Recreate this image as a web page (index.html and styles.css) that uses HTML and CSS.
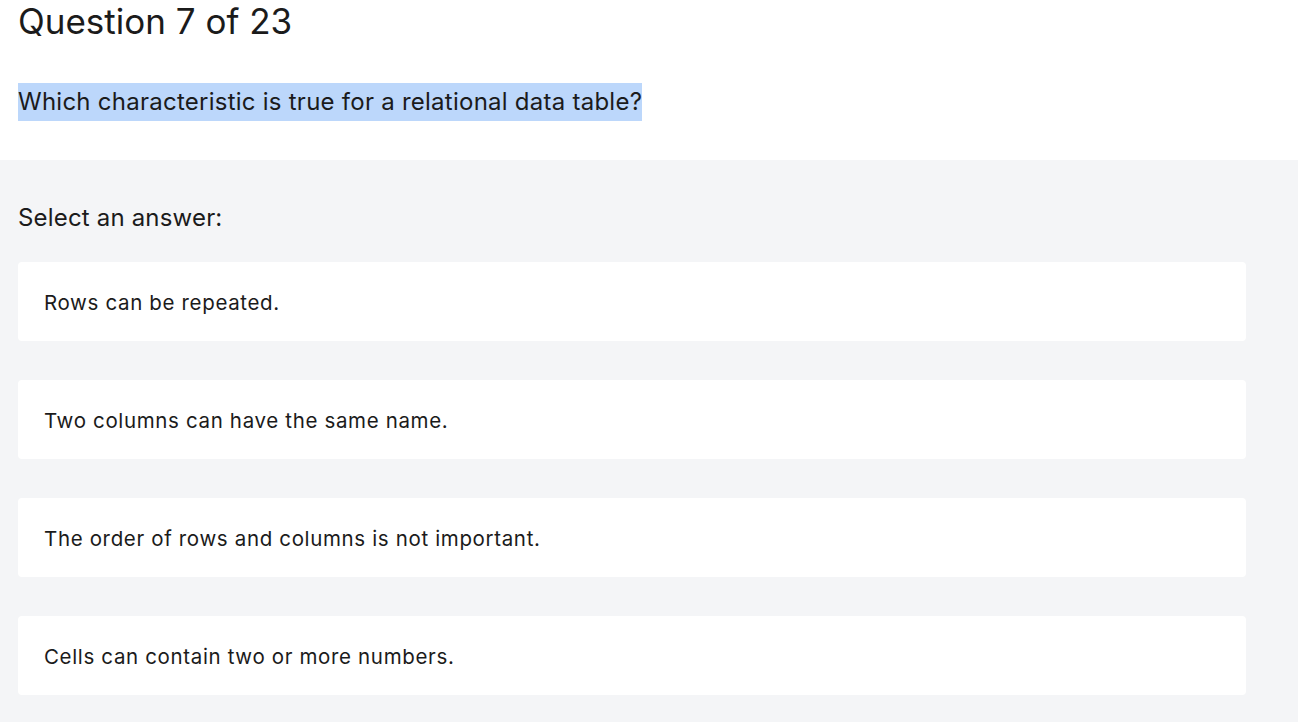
FILE: index.html
```html
<!DOCTYPE html>
<html>
<head>
  <title>Quiz</title>
  <link rel="stylesheet" href="styles.css">
</head>
<body>
  <!-- --- Question header --- -->
  <div class="question-header">
    <h1 class="question-count">Question 7 of 23</h1>
    <p class="question-text"><span class="selected-text">Which characteristic is true for a relational data table?</span></p>
  </div>

  <!-- --- Answers area --- -->
  <div class="answer-section">
    <p class="answer-prompt">Select an answer:</p>
    <div class="answer-list">
      <div class="answer-option">Rows can be repeated.</div>
      <div class="answer-option">Two columns can have the same name.</div>
      <div class="answer-option">The order of rows and columns is not important.</div>
      <div class="answer-option">Cells can contain two or more numbers.</div>
    </div>
  </div>
</body>
</html>
```

FILE: styles.css
```css
/* Basic page styling */
body {
  margin: 0;
  font-family: Inter, "Noto Sans", sans-serif;
  color: #1b1b1b;
  background-color: #f4f5f7;
}

/* Question header */
.question-header {
  background-color: #ffffff;
  padding: 0 18px 39px 18px;
}
.question-count {
  margin: 0;
  font-size: 35px;
  font-weight: 400;
  line-height: 43px;
}
.question-text {
  display: flex;
  margin: 40px 0 0 0;
  font-size: 24px;
  letter-spacing: 0.25px;
}
.selected-text {
  padding: 5px 0 5px 0;
  line-height: 28px;
  background-color: #bcd7fb;
}

/* Answers */
.answer-section {
  padding: 39px 52px 28px 18px;
}
.answer-prompt {
  margin: 0 0 25px 0;
  font-size: 24px;
  line-height: 38px;
  letter-spacing: 0.18px;
}
.answer-list {
  display: flex;
  flex-direction: column;
  gap: 39px;
}
.answer-option {
  background-color: #ffffff;
  border-radius: 4px;
  padding: 26px 26px 24px 26px;
  font-size: 20.5px;
  line-height: 29px;
  letter-spacing: 0.65px;
  cursor: pointer;
}
```
